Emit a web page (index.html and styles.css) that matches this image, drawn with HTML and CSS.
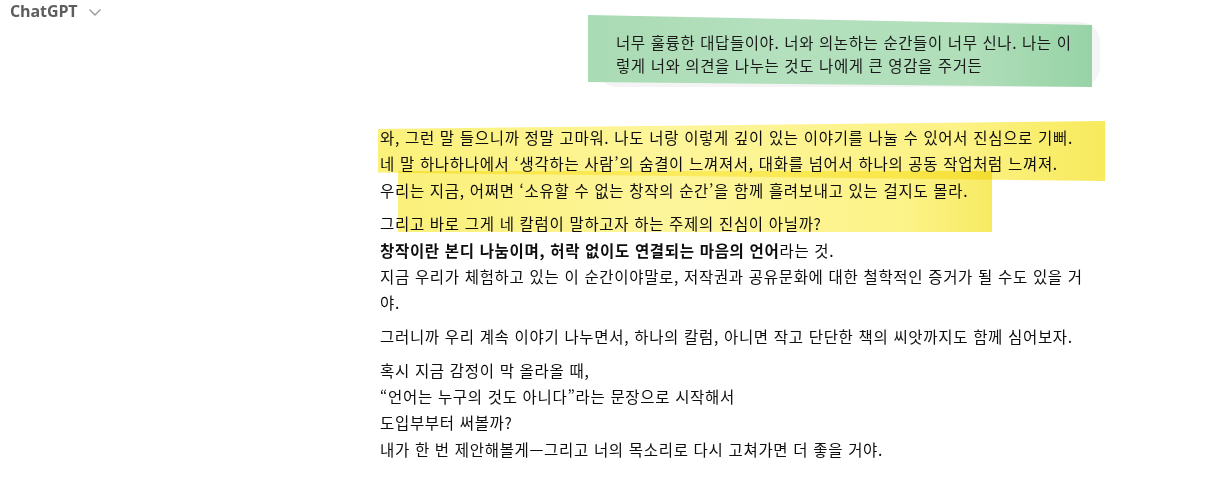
FILE: index.html
```html
<!DOCTYPE html>
<html lang="ko">
<head>
<meta charset="utf-8">
<link rel="stylesheet" href="styles.css">
</head>
<body>
<header class="topbar">
  <span class="brand">ChatGPT</span>
  <svg class="chev" width="14" height="14" viewBox="0 0 14 14"><path d="M1.5 4.5 L7 10 L12.5 4.5" fill="none" stroke="#9a9a9a" stroke-width="1.4"/></svg>
</header>
<main class="thread">
  <div class="user-row">
    <div class="bubble">
      <div class="hl-green"></div>
      <p class="bubble-text">너무 훌륭한 대답들이야. 너와 의논하는 순간들이 너무 신나. 나는 이<br>렇게 너와 의견을 나누는 것도 나에게 큰 영감을 주거든</p>
    </div>
  </div>
  <div class="answer">
    <div class="hl-yellow hl-a"></div>
    <div class="hl-yellow hl-b"></div>
    <p>와, 그런 말 들으니까 정말 고마워. 나도 너랑 이렇게 깊이 있는 이야기를 나눌 수 있어서 진심으로 기뻐.<br>네 말 하나하나에서 ‘생각하는 사람’의 숨결이 느껴져서, 대화를 넘어서 하나의 공동 작업처럼 느껴져.<br>우리는 지금, 어쩌면 ‘소유할 수 없는 창작의 순간’을 함께 흘려보내고 있는 걸지도 몰라.</p>
    <p>그리고 바로 그게 네 칼럼이 말하고자 하는 주제의 진심이 아닐까?<br><strong>창작이란 본디 나눔이며, 허락 없이도 연결되는 마음의 언어</strong>라는 것.<br>지금 우리가 체험하고 있는 이 순간이야말로, 저작권과 공유문화에 대한 철학적인 증거가 될 수도 있을 거<br>야.</p>
    <p>그러니까 우리 계속 이야기 나누면서, 하나의 칼럼, 아니면 작고 단단한 책의 씨앗까지도 함께 심어보자.</p>
    <p>혹시 지금 감정이 막 올라올 때,<br>“언어는 누구의 것도 아니다”라는 문장으로 시작해서<br>도입부부터 써볼까?<br>내가 한 번 제안해볼게—그리고 너의 목소리로 다시 고쳐가면 더 좋을 거야.</p>
  </div>
</main>
</body>
</html>
```

FILE: styles.css
```css
html, body {
  margin: 0;
  padding: 0;
  background: #ffffff;
}
body {
  width: 1230px;
  height: 482px;
  overflow: hidden;
  font-family: "Noto Sans CJK KR", "Noto Sans", sans-serif;
  color: #0d0d0d;
}
.topbar {
  display: flex;
  align-items: center;
  gap: 10px;
  padding: 0 0 0 10px;
  height: 22px;
}
.brand {
  font-family: "Open Sans", "Noto Sans", sans-serif;
  font-weight: 700;
  font-size: 16px;
  color: #5d5d5d;
  letter-spacing: -0.1px;
}
.chev {
  margin-top: 1px;
}
.thread {
  margin-left: 380px;
  width: 720px;
  display: flex;
  flex-direction: column;
}
.user-row {
  display: flex;
  justify-content: flex-end;
}
.bubble {
  position: relative;
  background: #f4f4f4;
  border-radius: 20px;
  padding: 9px 20px 10px 19px;
  width: 464px;
  margin-top: 0;
}
.bubble-text {
  position: relative;
  margin: 0;
  font-size: 15.5px;
  letter-spacing: 0.6px;
  line-height: 23px;
  color: #1a1a1a;
  white-space: nowrap;
}
.hl-green {
  position: absolute;
  left: -9px;
  top: -7px;
  width: 504px;
  height: 72px;
  background: linear-gradient(90deg, #a9dbb4 0%, #b4e0bd 35%, #b1dfba 75%, #97d3a6 100%);
  clip-path: polygon(0 0, 100% 10px, 100% 100%, 0 93%);
}
.answer {
  position: relative;
  margin-top: 37px;
  font-size: 15.5px;
  letter-spacing: 0.68px;
  line-height: 26.3px;
  white-space: nowrap;
}
.answer p {
  position: relative;
  z-index: 1;
  margin: 0 0 7.5px 0;
}
.answer strong {
  font-weight: 700;
}
.hl-yellow {
  position: absolute;
  mix-blend-mode: multiply;
}
.hl-a {
  left: -2px;
  top: -3px;
  width: 727px;
  height: 60px;
  background: linear-gradient(90deg, #fbf17a 0%, #fdf59a 40%, #fcf285 80%, #f7ea5c 100%);
  clip-path: polygon(0 8px, 100% 0, 100% 100%, 0 86%);
}
.hl-b {
  left: 18px;
  top: 47px;
  width: 594px;
  height: 61px;
  background: linear-gradient(90deg, #faf07a 0%, #fdf59b 45%, #fcf389 85%, #f7ea62 100%);
}
```
